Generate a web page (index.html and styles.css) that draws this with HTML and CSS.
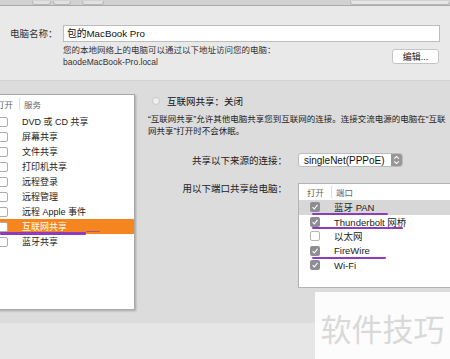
FILE: index.html
```html
<!DOCTYPE html>
<html lang="zh-CN">
<head>
    <meta charset="UTF-8">
    <meta name="viewport" content="width=device-width, initial-scale=1.0">
    <title>共享</title>
    <link rel="stylesheet" href="styles.css">
</head>
<body>
    <div class="toolbar">
        <span class="tb-btn tb-back"></span>
        <span class="tb-btn tb-fwd"></span>
        <span class="tb-btn tb-grid"></span>
        <span class="tb-search"></span>
    </div>

    <div class="name-section">
        <div class="name-label">电脑名称：</div>
        <div class="name-field">
            <div class="name-input">包的MacBook Pro</div>
            <div class="name-sub">
                <p class="hint">您的本地网络上的电脑可以通过以下地址访问您的电脑：<br>baodeMacBook-Pro.local</p>
                <button class="edit-btn">编辑...</button>
            </div>
        </div>
    </div>

    <div class="group">
        <div class="service-list">
            <div class="list-head"><span class="col-on">打开</span><span class="col-name">服务</span></div>
            <div class="list-row"><span class="check"></span>DVD 或 CD 共享</div>
            <div class="list-row"><span class="check"></span>屏幕共享</div>
            <div class="list-row"><span class="check"></span>文件共享</div>
            <div class="list-row"><span class="check"></span>打印机共享</div>
            <div class="list-row"><span class="check"></span>远程登录</div>
            <div class="list-row"><span class="check"></span>远程管理</div>
            <div class="list-row"><span class="check"></span>远程 Apple 事件</div>
            <div class="list-row selected"><span class="check"></span>互联网共享</div>
            <div class="list-row"><span class="check"></span>蓝牙共享</div>
        </div>

        <div class="detail">
            <div class="status"><span class="radio"></span>互联网共享：关闭</div>
            <p class="desc">“互联网共享”允许其他电脑共享您到互联网的连接。连接交流电源的电脑在“互联<br>网共享”打开时不会休眠。</p>

            <div class="form">
                <span class="form-label">共享以下来源的连接：</span>
                <div class="popup">
                    <span>singleNet(PPPoE)</span>
                    <span class="stepper">
                        <svg width="7" height="10" viewBox="0 0 7 10"><path d="M1.2 3.6 L3.5 1.4 L5.8 3.6 M1.2 6.4 L3.5 8.6 L5.8 6.4" fill="none" stroke="#fff" stroke-width="1.1"/></svg>
                    </span>
                </div>

                <span class="form-label top">用以下端口共享给电脑：</span>
                <div class="port-table">
                    <div class="port-head"><span class="pcol-on">打开</span><span class="pcol-name">端口</span></div>
                    <div class="port-row highlight"><span class="pcheck on"><svg width="10" height="10" viewBox="0 0 10 10"><path d="M2.6 5.2 L4.3 7 L7.5 2.8" fill="none" stroke="#fff" stroke-width="1.1"/></svg></span>蓝牙 PAN</div>
                    <div class="port-row"><span class="pcheck on"><svg width="10" height="10" viewBox="0 0 10 10"><path d="M2.6 5.2 L4.3 7 L7.5 2.8" fill="none" stroke="#fff" stroke-width="1.1"/></svg></span>Thunderbolt 网桥</div>
                    <div class="port-row"><span class="pcheck"></span>以太网</div>
                    <div class="port-row"><span class="pcheck on"><svg width="10" height="10" viewBox="0 0 10 10"><path d="M2.6 5.2 L4.3 7 L7.5 2.8" fill="none" stroke="#fff" stroke-width="1.1"/></svg></span>FireWire</div>
                    <div class="port-row"><span class="pcheck on"><svg width="10" height="10" viewBox="0 0 10 10"><path d="M2.6 5.2 L4.3 7 L7.5 2.8" fill="none" stroke="#fff" stroke-width="1.1"/></svg></span>Wi-Fi</div>
                </div>
            </div>
        </div>
    </div>

    <!-- annotation strokes drawn over the screenshot -->
    <span class="mark mark-service"></span>
    <span class="mark mark-tail"></span>
    <span class="mark mark-pan"></span>
    <span class="mark mark-tb"></span>
    <span class="mark mark-fw"></span>

    <div class="watermark">软件技巧</div>
</body>
</html>
```

FILE: styles.css
```css
body {
    margin: 0;
    width: 450px;
    height: 359px;
    overflow: hidden;
    position: relative;
    background-color: #e6e6e6;
    font-family: "Liberation Sans", "Noto Sans CJK SC", sans-serif;
    font-size: 9.5px;
    color: #222;
}

/* window toolbar, only its bottom edge is visible */
.toolbar {
    height: 5px;
    background-color: #d2d2d2;
    border-bottom: 1px solid #a9a9a9;
    display: flex;
    align-items: flex-end;
    padding-left: 32px;
}
.tb-btn, .tb-search {
    height: 3px;
    background-color: #e0e0e0;
    border: 1px solid #b9b9b9;
    border-top: none;
    border-radius: 0 0 3px 3px;
}
.tb-back { width: 17px; }
.tb-fwd { width: 16px; margin-left: 2px; }
.tb-grid { width: 20px; margin-left: 11px; }
.tb-search {
    width: 98px;
    margin-left: auto;
    background-color: #e6e6e6;
}

/* computer name */
.name-section {
    height: 74px;
    box-sizing: border-box;
    background-color: #e9e9e9;
    padding: 19px 10px 0 10px;
    display: grid;
    grid-template-columns: 53px 1fr;
}
.name-label {
    height: 17px;
    line-height: 17px;
    color: #333;
}
.name-input {
    height: 17px;
    box-sizing: border-box;
    border: 1px solid #bdbdbd;
    background-color: #fff;
    padding-left: 3px;
    line-height: 15px;
    font-size: 9.75px;
    color: #111;
}
.name-sub {
    display: flex;
    justify-content: space-between;
    margin-top: 2px;
}
.hint {
    margin: 0;
    font-size: 8.5px;
    line-height: 12px;
    color: #333;
}
.edit-btn {
    margin: 5px 1px 0 0;
    width: 47px;
    height: 15px;
    padding: 0;
    border: 1px solid #c4c4c4;
    border-radius: 3px;
    background-color: #fff;
    font-family: inherit;
    font-size: 9px;
    color: #222;
}

/* sharing group box */
.group {
    height: 243px;
    box-sizing: border-box;
    background-color: #dcdcdc;
    border-top: 1px solid #d3d3d3;
    display: flex;
    align-items: flex-start;
}
.service-list {
    flex-shrink: 0;
    width: 155px;
    height: 216px;
    margin: 13px 0 0 -20px;
    box-sizing: border-box;
    border: 1px solid #a9a9a9;
    background-color: #fff;
    box-shadow: 1px 1px 2px rgba(0, 0, 0, 0.25);
    padding-top: 0;
}
.list-head, .port-head {
    height: 17px;
    display: flex;
    align-items: center;
    font-size: 8.5px;
    color: #666;
    margin-bottom: 2px;
}
.col-on {
    width: 39px;
    box-sizing: border-box;
    padding-left: 15px;
    border-right: 1px solid #ddd;
}
.col-name {
    padding-left: 4px;
}
.list-row {
    height: 15px;
    display: flex;
    align-items: center;
    font-size: 9px;
}
.list-row.selected {
    background-color: #f5861f;
    color: #fff;
}
.check {
    width: 10px;
    height: 10px;
    box-sizing: border-box;
    border: 1px solid #adadad;
    border-radius: 2px;
    background-color: #fff;
    margin: 0 14px 0 17px;
}

.detail {
    flex: 1;
    min-width: 0;
    margin-left: 13px;
    padding-top: 14px;
}
.status {
    height: 12px;
    display: flex;
    align-items: center;
    color: #111;
}
.radio {
    width: 6px;
    height: 6px;
    border: 1px solid #c9c9c9;
    border-radius: 50%;
    background-color: #f0f0f0;
    margin: 0 7px 0 4px;
}
.desc {
    margin: 6px 0 0;
    font-size: 8.5px;
    line-height: 12px;
    white-space: nowrap;
    color: #222;
}

.form {
    display: grid;
    grid-template-columns: 142px 1fr;
    column-gap: 8px;
    row-gap: 16px;
    margin-top: 16px;
    align-items: center;
}
.form-label {
    text-align: right;
    padding-right: 3px;
    color: #222;
}
.form-label.top {
    align-self: start;
    line-height: 12px;
}
.popup {
    width: 105px;
    height: 14px;
    box-sizing: border-box;
    border: 1px solid #bdbdbd;
    border-radius: 3px;
    background-color: #fff;
    display: flex;
    align-items: center;
    padding-left: 5px;
    font-size: 10px;
    color: #111;
}
.stepper {
    margin-left: auto;
    width: 11px;
    height: 100%;
    background-color: #979797;
    border-radius: 0 2px 2px 0;
    display: flex;
    align-items: center;
    justify-content: center;
}

.port-table {
    width: 170px;
    height: 105px;
    box-sizing: border-box;
    border: 1px solid #b3b3b3;
    background-color: #fff;
}
.port-head {
    height: 16px;
    margin-bottom: 0;
}
.pcol-on {
    width: 33px;
    box-sizing: border-box;
    padding-left: 8px;
    border-right: 1px solid #ddd;
}
.pcol-name {
    padding-left: 4px;
}
.port-row {
    height: 14.5px;
    display: flex;
    align-items: center;
}
.port-row.highlight {
    background-color: #d7d7d7;
}
.pcheck {
    width: 10px;
    height: 10px;
    box-sizing: border-box;
    border: 1px solid #b5b5b5;
    border-radius: 2px;
    background-color: #fff;
    margin: 0 14px 0 11px;
    display: flex;
}
.pcheck.on {
    border: none;
    background-color: #8d8d93;
}

/* purple pen marks */
.mark {
    position: absolute;
    height: 2px;
    background-color: #8f3cbc;
    border-radius: 1px;
}
.mark-service { left: 0; top: 232px; width: 86px; height: 2.5px; }
.mark-tail { left: 86px; top: 231px; width: 14px; height: 1px; opacity: 0.7; }
.mark-pan { left: 312px; top: 213px; width: 76px; }
.mark-tb { left: 312px; top: 227px; width: 91px; }
.mark-fw { left: 312px; top: 257px; width: 74px; }

.watermark {
    position: absolute;
    left: 315px;
    top: 292px;
    right: 0;
    bottom: 0;
    background-color: #fcfcfc;
    color: #d9d9d9;
    font-family: "Noto Sans CJK SC", sans-serif;
    font-size: 31px;
    display: flex;
    align-items: center;
    justify-content: center;
    padding-top: 3px;
    box-sizing: border-box;
}
```
